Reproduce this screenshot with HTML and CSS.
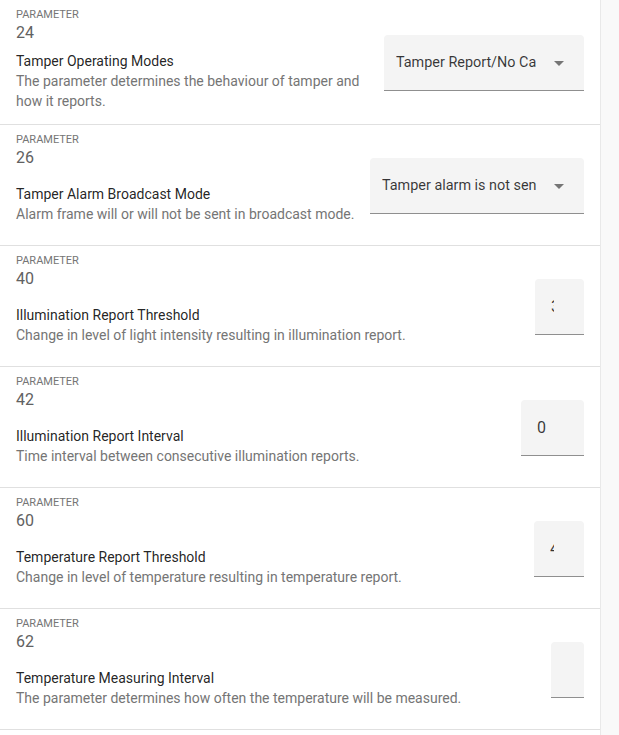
FILE: index.html
```html
<!DOCTYPE html>
<html>
<head>
<meta charset="utf-8">
<link rel="stylesheet" href="styles.css">
</head>
<body>
<div class="page">
  <div class="list">
    <div class="row">
      <div class="info">
        <div class="overline">PARAMETER</div>
        <div class="num">24</div>
        <div class="text">
          <div class="title">Tamper Operating Modes</div>
          <div class="desc">The parameter determines the behaviour of tamper and<br>how it reports.</div>
        </div>
      </div>
      <div class="select select-a">
        <span class="select-value">Tamper Report/No Cancel</span>
        <span class="arrow"></span>
      </div>
    </div>
    <div class="row">
      <div class="info">
        <div class="overline">PARAMETER</div>
        <div class="num">26</div>
        <div class="text">
          <div class="title">Tamper Alarm Broadcast Mode</div>
          <div class="desc">Alarm frame will or will not be sent in broadcast mode.</div>
        </div>
      </div>
      <div class="select select-b">
        <span class="select-value">Tamper alarm is not sent</span>
        <span class="arrow"></span>
      </div>
    </div>
    <div class="row">
      <div class="info">
        <div class="overline">PARAMETER</div>
        <div class="num">40</div>
        <div class="text">
          <div class="title">Illumination Report Threshold</div>
          <div class="desc">Change in level of light intensity resulting in illumination report.</div>
        </div>
      </div>
      <div class="field field-a"><span class="field-value">300</span></div>
    </div>
    <div class="row">
      <div class="info">
        <div class="overline">PARAMETER</div>
        <div class="num">42</div>
        <div class="text">
          <div class="title">Illumination Report Interval</div>
          <div class="desc">Time interval between consecutive illumination reports.</div>
        </div>
      </div>
      <div class="field field-b"><span class="field-value">0</span></div>
    </div>
    <div class="row">
      <div class="info">
        <div class="overline">PARAMETER</div>
        <div class="num">60</div>
        <div class="text">
          <div class="title">Temperature Report Threshold</div>
          <div class="desc">Change in level of temperature resulting in temperature report.</div>
        </div>
      </div>
      <div class="field field-c"><span class="field-value">4</span></div>
    </div>
    <div class="row">
      <div class="info">
        <div class="overline">PARAMETER</div>
        <div class="num">62</div>
        <div class="text">
          <div class="title">Temperature Measuring Interval</div>
          <div class="desc">The parameter determines how often the temperature will be measured.</div>
        </div>
      </div>
      <div class="field field-d"><span class="field-value">600</span></div>
    </div>
  </div>
  <div class="scroll"></div>
</div>
</body>
</html>
```
FILE: styles.css
```css
html, body {
  margin: 0;
  padding: 0;
  background: #ffffff;
}
body {
  font-family: Roboto, "Noto Sans", sans-serif;
}
.page {
  display: flex;
  width: 619px;
  height: 735px;
  overflow: hidden;
}
.list {
  width: 600px;
  flex: none;
}
.scroll {
  flex: 1;
  background: #f9f9f9;
  border-left: 1px solid #e9e9e9;
}
.row {
  display: flex;
  align-items: center;
  padding: 7px 16px 5px 16px;
  border-bottom: 1px solid #e0e0e0;
}
.info {
  flex: 1;
  min-width: 0;
  display: flex;
  flex-direction: column;
}
.overline {
  font-size: 11px;
  line-height: 16px;
  color: #757575;
}
.num {
  font-size: 16px;
  line-height: 20px;
  color: #616161;
}
.text {
  min-height: 56px;
  padding: 8px 0;
  display: flex;
  flex-direction: column;
  justify-content: center;
}
.title {
  font-size: 14px;
  line-height: 20px;
  color: rgba(0, 0, 0, 0.87);
}
.desc {
  font-size: 14px;
  line-height: 20px;
  color: #757575;
}
.select, .field {
  flex: none;
  height: 55px;
  background: #f4f4f4;
  border-bottom: 1px solid #8f8f8f;
  border-radius: 4px 4px 0 0;
  display: flex;
  align-items: center;
  box-sizing: content-box;
}
.select {
  padding: 0 48px 0 12px;
  position: relative;
}
.select-a { width: 140px; }
.select-b { width: 154px; }
.select-value {
  flex: 1;
  min-width: 0;
  font-size: 14.4px;
  color: rgba(0, 0, 0, 0.78);
  white-space: nowrap;
  overflow: hidden;
}
.arrow {
  position: absolute;
  right: 20px;
  top: 26px;
  width: 0;
  height: 0;
  border-left: 5px solid transparent;
  border-right: 5px solid transparent;
  border-top: 5px solid #757575;
}
.field {
  padding-left: 16px;
}
.field-value {
  font-size: 16px;
  color: rgba(0, 0, 0, 0.78);
  white-space: nowrap;
  overflow: hidden;
}
.field-a { width: 33px; }
.field-a .field-value { width: 3px; }
.field-b { width: 47px; }
.field-b .field-value { width: 17px; }
.field-c { width: 34px; }
.field-c .field-value { width: 4px; }
.field-d { width: 17px; }
.field-d .field-value { width: 0; }
```
